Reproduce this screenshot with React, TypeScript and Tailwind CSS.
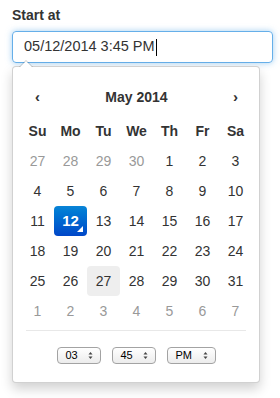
import React from "react";

const weeks: { d: number; muted?: boolean }[][] = [
  [{ d: 27, muted: true }, { d: 28, muted: true }, { d: 29, muted: true }, { d: 30, muted: true }, { d: 1 }, { d: 2 }, { d: 3 }],
  [{ d: 4 }, { d: 5 }, { d: 6 }, { d: 7 }, { d: 8 }, { d: 9 }, { d: 10 }],
  [{ d: 11 }, { d: 12 }, { d: 13 }, { d: 14 }, { d: 15 }, { d: 16 }, { d: 17 }],
  [{ d: 18 }, { d: 19 }, { d: 20 }, { d: 21 }, { d: 22 }, { d: 23 }, { d: 24 }],
  [{ d: 25 }, { d: 26 }, { d: 27 }, { d: 28 }, { d: 29 }, { d: 30 }, { d: 31 }],
  [{ d: 1, muted: true }, { d: 2, muted: true }, { d: 3, muted: true }, { d: 4, muted: true }, { d: 5, muted: true }, { d: 6, muted: true }, { d: 7, muted: true }],
];

function Sel({ v, w }: { v: string; w: string }) {
  return (
    <div
      className={`${w} h-[17px] flex items-center justify-between pl-[8px] pr-[7px] rounded-[4px] border border-[#a3a3a3] bg-gradient-to-b from-white to-[#ececec] text-[11px] text-black leading-none`}
    >
      <span>{v}</span>
      <svg width="5" height="9" viewBox="0 0 5 9">
        <path d="M0.5 3.5 L2.5 1 L4.5 3.5 Z" fill="#444" />
        <path d="M0.5 5.5 L2.5 8 L4.5 5.5 Z" fill="#444" />
      </svg>
    </div>
  );
}

export default function App() {
  return (
    <div className="w-[280px] h-[398px] bg-white text-[#333] pl-[12px]" style={{ fontFamily: '"Liberation Sans", Arial, sans-serif' }}>
      <div className="pt-[5px] h-[25px] text-[14px] leading-[20px] font-bold">Start at</div>
      <div className="mt-[6px] w-[261px] h-[32px] rounded-[4px] border border-[#66afe9] shadow-[0_0_6px_rgba(102,175,233,0.6)] flex items-center pl-[11px] text-[14.5px] text-[#333]">
        <span>05/12/2014 3:45 PM</span>
        <span className="inline-block w-[1px] h-[17px] bg-black ml-[1px]" />
      </div>
      <div className="relative mt-[3px] w-[248px] rounded-[4px] border border-[rgba(0,0,0,0.18)] bg-white shadow-[0_6px_12px_rgba(0,0,0,0.18)] pt-[15px] pb-[18px] px-[8px]">
        <div className="absolute left-[6px] top-[-7px] w-0 h-0 border-l-[7px] border-r-[7px] border-b-[7px] border-l-transparent border-r-transparent border-b-[rgba(0,0,0,0.2)]" />
        <div className="absolute left-[7px] top-[-6px] w-0 h-0 border-l-[6px] border-r-[6px] border-b-[6px] border-l-transparent border-r-transparent border-b-white" />
        <div className="grid grid-cols-[repeat(7,33px)] w-[231px] text-[14px]">
          <div className="h-[30px] flex items-center justify-center font-bold text-[15px]">‹</div>
          <div className="col-span-5 h-[30px] flex items-center justify-center font-bold">May 2014</div>
          <div className="h-[30px] flex items-center justify-center font-bold text-[15px]">›</div>
        </div>
        <div className="mt-[4px] grid grid-cols-[repeat(7,33px)] w-[231px] text-[14px]">
          {["Su", "Mo", "Tu", "We", "Th", "Fr", "Sa"].map((h) => (
            <div key={h} className="h-[30px] flex items-center justify-center font-bold">
              {h}
            </div>
          ))}
          {weeks.map((w, wi) =>
            w.map((c, ci) => {
              const selected = wi === 2 && ci === 1;
              const hover = wi === 4 && ci === 2;
              let cls = "h-[30px] flex items-center justify-center rounded-[4px] relative";
              if (selected) cls += " bg-gradient-to-b from-[#0a84d6] to-[#0046c8] text-white font-bold text-[15px]";
              else if (hover) cls += " bg-[#eeeeee]";
              if (c.muted) cls += " text-[#999]";
              return (
                <div key={`${wi}-${ci}`} className={cls}>
                  {c.d}
                  {selected && (
                    <span className="absolute right-[4px] bottom-[4px] w-0 h-0 border-l-[6px] border-l-transparent border-b-[6px] border-b-white" />
                  )}
                </div>
              );
            })
          )}
        </div>
        <div className="mt-[4px] mx-auto w-[220px] h-[1px] bg-[#e8e8e8]" />
        <div className="mt-[16px] flex justify-center gap-[11px]">
          <Sel v="03" w="w-[44px]" />
          <Sel v="45" w="w-[44px]" />
          <Sel v="PM" w="w-[49px]" />
        </div>
      </div>
    </div>
  );
}
